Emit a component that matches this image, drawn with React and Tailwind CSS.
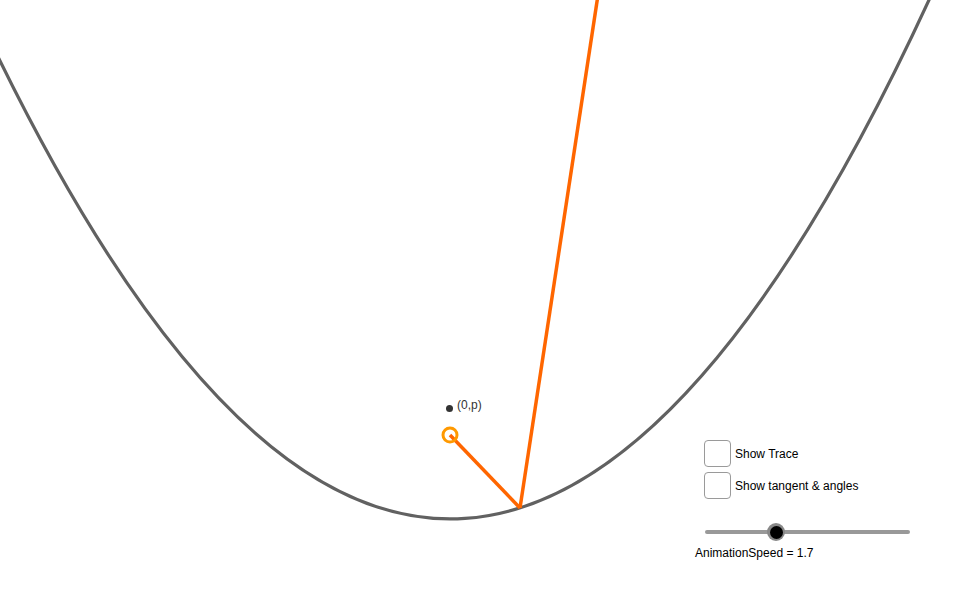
import React from "react";

export default function App() {
  return (
    <div className="relative w-[973px] h-[602px] bg-white overflow-hidden" style={{ fontFamily: '"Liberation Sans", Arial, sans-serif' }}>
      <svg width="973" height="602" className="absolute left-0 top-0">
        <path d="M -20 19.3 Q 465 1050.5 950 -46.5" fill="none" stroke="#616161" strokeWidth="3.2" />
        <line x1="520" y1="508" x2="598" y2="-5" stroke="#ff6600" strokeWidth="3.5" />
        <line x1="450" y1="435" x2="520" y2="508" stroke="#ff6600" strokeWidth="3.5" />
        <circle cx="450" cy="435" r="7" fill="none" stroke="#ff9900" strokeWidth="3" />
        <circle cx="449.5" cy="408.5" r="3.5" fill="#333333" />
        <text x="457" y="409" fontSize="12" fill="#333" fontFamily='"Liberation Sans", Arial, sans-serif'>(0,p)</text>
      </svg>

      <div className="absolute left-[695px] top-[440px] flex flex-col text-[12px] text-black">
        <label className="flex items-center gap-[4px] ml-[9px]">
          <span className="w-[27px] h-[27px] rounded-[4px] border border-[#9a9a9a] bg-white" />
          <span>Show Trace</span>
        </label>
        <label className="flex items-center gap-[4px] ml-[9px] mt-[5px]">
          <span className="w-[27px] h-[27px] rounded-[4px] border border-[#9a9a9a] bg-white" />
          <span>Show tangent &amp; angles</span>
        </label>
        <div className="relative ml-[10px] mt-[24px] w-[205px] h-[18px] flex items-center">
          <div className="w-full h-[4px] rounded-full bg-[#999999]" />
          <div className="absolute left-[62px] top-0 w-[18px] h-[18px] rounded-full bg-[#888888] flex items-center justify-center">
            <div className="w-[13px] h-[13px] rounded-full bg-black" />
          </div>
        </div>
        <div className="mt-[6px] leading-none">AnimationSpeed = 1.7</div>
      </div>
    </div>
  );
}
